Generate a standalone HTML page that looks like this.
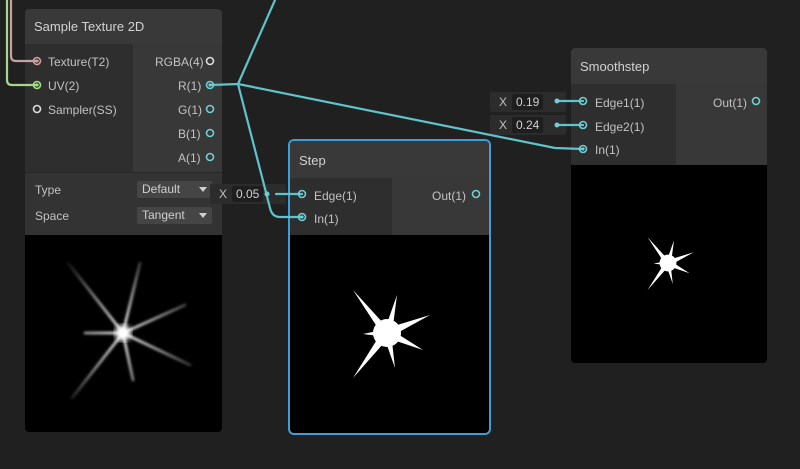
<!DOCTYPE html>
<html><head><meta charset="utf-8"><style>
*{margin:0;padding:0;box-sizing:border-box}
body{width:800px;height:469px;background:#202020;position:relative;overflow:hidden;font-family:"Liberation Sans",sans-serif;font-size:12px;color:#c2c2c2}
.abs{position:absolute}
.node{position:absolute;background:#2e2e2e;border-radius:4px;overflow:hidden}
.hdr{position:absolute;left:0;right:0;top:0;background:#393939;font-size:13px;color:#d2d2d2;padding-left:9px}
.t{position:absolute;white-space:nowrap;line-height:14px}
.dd{position:absolute;background:#454545;border-radius:2px;height:17px;font-size:12px;line-height:17px;padding-left:5px;color:#cfcfcf}
.dd:after{content:"";position:absolute;right:5px;top:6px;border-left:4px solid transparent;border-right:4px solid transparent;border-top:5px solid #cfcfcf}
.fld{position:absolute;background:#2c2c2c;border-radius:2px;height:20px}
.fld .x{position:absolute;left:9px;top:3px}
.fld .v{position:absolute;left:22px;top:2px;height:16px;width:31px;background:#1e1e1e;border-radius:2px;padding-left:4px;line-height:16px;color:#d0d0d0}
</style></head><body>

<div class="node" style="left:25px;top:9px;width:197px;height:423px;background:#000">
 <div class="hdr" style="height:35px;line-height:35px">Sample Texture 2D</div>
 <div class="abs" style="left:0;top:35px;width:108px;height:128px;background:#2e2e2e"></div>
 <div class="abs" style="left:108px;top:35px;width:89px;height:128px;background:#383838"></div>
 <div class="abs" style="left:0;top:163px;width:197px;height:63px;background:#333;border-top:1px solid #282828"></div>
</div>
<div class="t" style="left:48px;top:55px">Texture(T2)</div>
<div class="t" style="left:48px;top:79px">UV(2)</div>
<div class="t" style="left:48px;top:103px">Sampler(SS)</div>
<div class="t" style="left:155px;top:55px">RGBA(4)</div>
<div class="t" style="left:178px;top:79px">R(1)</div>
<div class="t" style="left:178px;top:103px">G(1)</div>
<div class="t" style="left:178px;top:127px">B(1)</div>
<div class="t" style="left:178px;top:151px">A(1)</div>
<div class="t" style="left:35px;top:183px">Type</div>
<div class="t" style="left:35px;top:209px">Space</div>
<div class="dd" style="left:137px;top:181px;width:75px">Default</div>
<div class="dd" style="left:137px;top:207px;width:75px">Tangent</div>

<div class="node" style="left:288px;top:139px;width:203px;height:296px;background:#000;border:2px solid #3d9fd6;border-radius:6px">
 <div class="hdr" style="height:37px;line-height:40px">Step</div>
 <div class="abs" style="left:0;top:37px;width:102px;height:57px;background:#2e2e2e"></div>
 <div class="abs" style="left:102px;top:37px;width:97px;height:57px;background:#383838"></div>
</div>
<div class="t" style="left:314px;top:189px">Edge(1)</div>
<div class="t" style="left:314px;top:212px">In(1)</div>
<div class="t" style="left:432px;top:189px">Out(1)</div>

<div class="node" style="left:571px;top:48px;width:196px;height:315px;background:#000">
 <div class="hdr" style="height:36px;line-height:38px">Smoothstep</div>
 <div class="abs" style="left:0;top:36px;width:105px;height:81px;background:#2e2e2e"></div>
 <div class="abs" style="left:105px;top:36px;width:91px;height:81px;background:#383838"></div>
</div>
<div class="t" style="left:595px;top:96px">Edge1(1)</div>
<div class="t" style="left:595px;top:120px">Edge2(1)</div>
<div class="t" style="left:595px;top:143px">In(1)</div>
<div class="t" style="left:713px;top:96px">Out(1)</div>

<div class="fld" style="left:210px;top:184px;width:76px"><span class="x">X</span><span class="v">0.05</span></div>
<div class="fld" style="left:490px;top:92px;width:76px"><span class="x">X</span><span class="v">0.19</span></div>
<div class="fld" style="left:490px;top:115px;width:76px"><span class="x">X</span><span class="v">0.24</span></div>

<svg class="abs" style="left:0;top:0" width="800" height="469">
<defs>
 <radialGradient id="rg" cx="123" cy="333" r="95" gradientUnits="userSpaceOnUse">
  <stop offset="0" stop-color="#fff"/><stop offset="0.45" stop-color="#999"/><stop offset="1" stop-color="#000"/>
 </radialGradient>
 <mask id="m"><rect x="25" y="235" width="197" height="197" fill="url(#rg)"/></mask>
 <filter id="bl"><feGaussianBlur stdDeviation="1.2"/></filter>
 <filter id="bl2"><feGaussianBlur stdDeviation="3"/></filter>
 <g id="star">
  <polygon points="353,290 389.3,329.9 383.1,336.1"/>
  <polygon points="397,295 391.9,334.3 384.1,331.7"/>
  <polygon points="430,315 388.9,337.6 386.1,328.4"/>
  <polygon points="423,350 385.9,337.5 389.1,328.5"/>
  <polygon points="395,368 383.1,334.1 390.9,331.9"/>
  <polygon points="353,378 383,330 390,336"/>
  <polygon points="363,334 387,337 387,329"/>
  <circle cx="387" cy="333" r="14"/>
 </g>
</defs>
<g mask="url(#m)" stroke="#fff" stroke-linecap="round" filter="url(#bl)">
 <g stroke-width="2.6">
 <line x1="123" y1="333" x2="68" y2="263"/>
 <line x1="123" y1="333" x2="140" y2="263"/>
 <line x1="123" y1="333" x2="185" y2="305"/>
 <line x1="123" y1="333" x2="190" y2="365"/>
 <line x1="123" y1="333" x2="133" y2="380"/>
 <line x1="123" y1="333" x2="72" y2="398"/>
 <line x1="123" y1="333" x2="85" y2="333"/>
 </g>
</g>
<circle cx="123" cy="333" r="8" fill="#fff" filter="url(#bl2)"/>
<circle cx="123" cy="333" r="3" fill="#fff"/>
<use href="#star" fill="#fff"/>
<g transform="translate(668,263) scale(0.6) translate(-387,-333)" fill="#fff"><use href="#star"/></g>

<g fill="none" stroke-width="2.2" stroke-linecap="round">
 <path d="M11,0 L11,56 Q11,61 16,61 L37,61" stroke="#c8a2a2"/>
 <path d="M7,0 L7,80 Q7,85 12,85 L37,85" stroke="#a9d68a"/>
 <g stroke="#5fc4c9">
  <path d="M211,85 L238,84 L275,0"/>
  <path d="M238,84 L555,148 L583,149"/>
  <path d="M238,84 L270,208 Q272,217 280,217 L302,217"/>
  <path d="M276,194 L302,194"/>
  <path d="M556,101 L583,101"/>
  <path d="M556,125 L583,125"/>
 </g>
</g>
<g fill="#6fcfd4"><circle cx="267" cy="194" r="2.5"/><circle cx="557" cy="101" r="2.5"/><circle cx="557" cy="125" r="2.5"/></g>
<g fill="none" stroke-width="1.6">
 <circle cx="37" cy="61" r="3.5" stroke="#d0a0a0"/><circle cx="37" cy="61" r="1.6" fill="#d0a0a0" stroke="none"/>
 <circle cx="37" cy="85" r="3.5" stroke="#9fe08a"/><circle cx="37" cy="85" r="1.6" fill="#9fe08a" stroke="none"/>
 <circle cx="37" cy="109" r="3.5" stroke="#ddd"/>
 <circle cx="210" cy="61" r="3.5" stroke="#ddd"/>
 <g stroke="#6fcfd4">
  <circle cx="210" cy="85" r="3.5"/><circle cx="210" cy="109" r="3.5"/><circle cx="210" cy="133" r="3.5"/><circle cx="210" cy="157" r="3.5"/>
  <circle cx="302" cy="194" r="3.5"/><circle cx="302" cy="217" r="3.5"/><circle cx="476" cy="194" r="3.5"/>
  <circle cx="583" cy="101" r="3.5"/><circle cx="583" cy="125" r="3.5"/><circle cx="583" cy="149" r="3.5"/><circle cx="756" cy="101" r="3.5"/>
 </g>
 <g fill="#6fcfd4" stroke="none"><circle cx="210" cy="85" r="1.6"/><circle cx="302" cy="217" r="1.6"/><circle cx="583" cy="149" r="1.6"/></g>
</g>
</svg>
</body></html>
